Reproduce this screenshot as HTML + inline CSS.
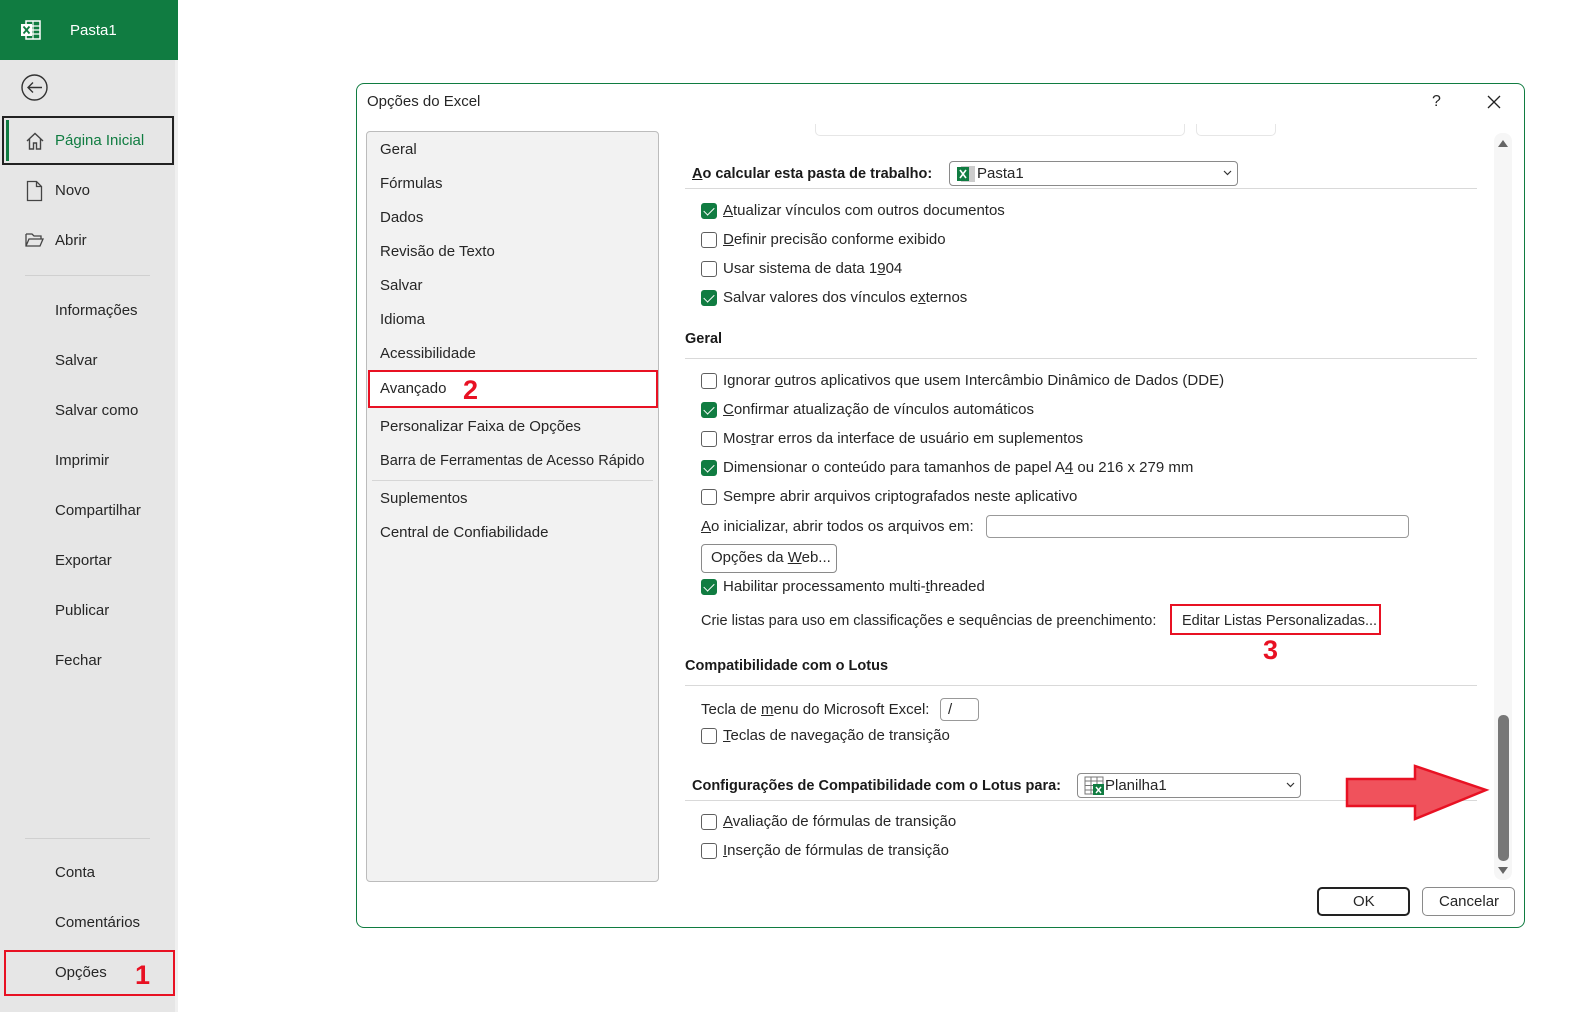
<!DOCTYPE html>
<html><head><meta charset="utf-8">
<style>
*{margin:0;padding:0;box-sizing:border-box}
body{width:1572px;height:1012px;position:relative;background:#fff;font-family:"Liberation Sans",sans-serif;font-size:15px;color:#262626;overflow:hidden}
.a{position:absolute;white-space:nowrap;line-height:18px}
.b{font-weight:bold;color:#1a1a1a;font-size:14.5px}
.cb{position:absolute;width:16px;height:16px;border:1px solid #5f5f5f;border-radius:3px;background:#fff}
.cb.on{background:#107c41;border-color:#107c41}
.cb.on::after{content:"";position:absolute;left:4px;top:1px;width:5px;height:9px;border:solid #fff;border-width:0 1.8px 1.8px 0;transform:rotate(45deg)}
.hr{position:absolute;height:1px;background:#d9d9d9}
.red{position:absolute;border:2.5px solid #e81123}
.num{position:absolute;color:#e81123;font-weight:bold;font-size:27px;line-height:26px}
.btn{position:absolute;border:1px solid #8a8a8a;border-radius:4px;background:#fff}
u{text-decoration:underline}
</style></head><body>
<div style="position:absolute;left:0;top:0;width:178px;height:60px;background:#107c41"></div>
<svg style="position:absolute;left:20px;top:20px" width="21" height="20" viewBox="0 0 21 20"><rect x="6" y="1" width="14" height="18" fill="none" stroke="#fff" stroke-width="1.5"/><path d="M6 6h14M6 10h14M6 14h14M13 1v18" stroke="#fff" stroke-width="1.2"/><rect x="1" y="4" width="11" height="12" fill="#fff"/><path d="M3.5 6.5l6 7M9.5 6.5l-6 7" stroke="#107c41" stroke-width="1.8"/></svg>
<div class="a" style="left:70px;top:22px;color:#fff;font-size:15px">Pasta1</div>
<div style="position:absolute;left:0;top:60px;width:175px;height:952px;background:#e6e6e6"></div>
<div style="position:absolute;left:175px;top:60px;width:3px;height:952px;background:#f0f0f0"></div>
<svg style="position:absolute;left:20px;top:73px" width="29" height="29"><circle cx="14.5" cy="14.5" r="12.5" fill="none" stroke="#333" stroke-width="1.4"/><path d="M8 14.5h14M13 9.5l-5 5 5 5" fill="none" stroke="#333" stroke-width="1.4"/></svg>
<div style="position:absolute;left:2px;top:116px;width:172px;height:49px;border:2px solid #222"></div>
<div style="position:absolute;left:6px;top:120px;width:3px;height:41px;background:#107c41"></div>
<svg style="position:absolute;left:25px;top:131px" width="20" height="20"><path d="M2 10L10 2.5 18 10M4.5 8v10h4v-6h3v6h4V8" fill="none" stroke="#444" stroke-width="1.4"/></svg>
<div class="a" style="left:55px;top:132px;color:#107c41">Página Inicial</div>
<svg style="position:absolute;left:26px;top:180px" width="18" height="22"><path d="M1.5 1.5h9l5 5v14h-14z M10.5 1.5v5h5" fill="none" stroke="#444" stroke-width="1.3"/></svg>
<div class="a" style="left:55px;top:182px">Novo</div>
<svg style="position:absolute;left:25px;top:232px" width="20" height="16"><path d="M1 2h6l2 2h7v3M1 2v12h14l3-7H4L1 14" fill="none" stroke="#444" stroke-width="1.3"/></svg>
<div class="a" style="left:55px;top:232px">Abrir</div>
<div class="hr" style="left:25px;top:275px;width:125px;background:#d0d0d0"></div>
<div class="a" style="left:55px;top:302px">Informações</div>
<div class="a" style="left:55px;top:352px">Salvar</div>
<div class="a" style="left:55px;top:402px">Salvar como</div>
<div class="a" style="left:55px;top:452px">Imprimir</div>
<div class="a" style="left:55px;top:502px">Compartilhar</div>
<div class="a" style="left:55px;top:552px">Exportar</div>
<div class="a" style="left:55px;top:602px">Publicar</div>
<div class="a" style="left:55px;top:652px">Fechar</div>
<div class="hr" style="left:25px;top:838px;width:125px;background:#d0d0d0"></div>
<div class="a" style="left:55px;top:864px">Conta</div>
<div class="a" style="left:55px;top:914px">Comentários</div>
<div class="red" style="left:4px;top:950px;width:171px;height:46px"></div>
<div class="a" style="left:55px;top:964px">Opções</div>
<div class="num" style="left:135px;top:962px">1</div>

<div style="position:absolute;left:356px;top:83px;width:1169px;height:845px;border:1px solid #107c41;border-radius:8px;background:#fff"></div>
<div class="a" style="left:367px;top:93px">Opções do Excel</div>
<div class="a" style="left:1432px;top:93px;font-size:16px">?</div>
<svg style="position:absolute;left:1487px;top:95px" width="14" height="14"><path d="M1 1l12 12M13 1L1 13" stroke="#222" stroke-width="1.3"/></svg>

<div style="position:absolute;left:366px;top:131px;width:293px;height:751px;border:1px solid #bcbcbc;border-radius:4px;background:#f2f2f2"></div>
<div class="a" style="left:380px;top:141px">Geral</div>
<div class="a" style="left:380px;top:175px">Fórmulas</div>
<div class="a" style="left:380px;top:209px">Dados</div>
<div class="a" style="left:380px;top:243px">Revisão de Texto</div>
<div class="a" style="left:380px;top:277px">Salvar</div>
<div class="a" style="left:380px;top:311px">Idioma</div>
<div class="a" style="left:380px;top:345px">Acessibilidade</div>
<div style="position:absolute;left:368px;top:370px;width:289px;height:38px;background:#fff"></div>
<div class="red" style="left:368px;top:370px;width:290px;height:38px"></div>
<div class="a" style="left:380px;top:380px">Avançado</div>
<div class="num" style="left:463px;top:377px">2</div>
<div class="a" style="left:380px;top:418px">Personalizar Faixa de Opções</div>
<div class="a" style="left:380px;top:452px;font-size:14.6px">Barra de Ferramentas de Acesso Rápido</div>
<div class="hr" style="left:372px;top:480px;width:281px;background:#d6d6d6"></div>
<div class="a" style="left:380px;top:490px">Suplementos</div>
<div class="a" style="left:380px;top:524px">Central de Confiabilidade</div>

<div style="position:absolute;left:815px;top:124px;width:370px;height:12px;border:1px solid #e6e6e6;border-top:none;border-radius:0 0 5px 5px"></div>
<div style="position:absolute;left:1196px;top:124px;width:80px;height:12px;border:1px solid #e6e6e6;border-top:none;border-radius:0 0 5px 5px"></div>

<div class="a b" style="left:692px;top:165px"><u>A</u>o calcular esta pasta de trabalho:</div>
<div class="btn" style="left:949px;top:161px;width:289px;height:25px"></div>
<svg style="position:absolute;left:956px;top:165px" width="20" height="18"><rect x="5" y="1" width="14" height="16" fill="#ccc"/><rect x="1" y="2" width="12" height="14" fill="#107c41"/><path d="M4 5l6 8M10 5l-6 8" stroke="#fff" stroke-width="1.6"/></svg>
<div class="a" style="left:977px;top:165px">Pasta1</div>
<svg style="position:absolute;left:1223px;top:170px" width="9" height="6"><path d="M1 1l3.5 3.5L8 1" fill="none" stroke="#333" stroke-width="1.2"/></svg>
<div class="hr" style="left:685px;top:188px;width:792px"></div>

<div class="cb on" style="left:701px;top:203px"></div><div class="a" style="left:723px;top:202px"><u>A</u>tualizar vínculos com outros documentos</div>
<div class="cb" style="left:701px;top:232px"></div><div class="a" style="left:723px;top:231px"><u>D</u>efinir precisão conforme exibido</div>
<div class="cb" style="left:701px;top:261px"></div><div class="a" style="left:723px;top:260px">Usar sistema de data 1<u>9</u>04</div>
<div class="cb on" style="left:701px;top:290px"></div><div class="a" style="left:723px;top:289px">Salvar valores dos vínculos e<u>x</u>ternos</div>

<div class="a b" style="left:685px;top:330px">Geral</div>
<div class="hr" style="left:685px;top:358px;width:792px"></div>
<div class="cb" style="left:701px;top:373px"></div><div class="a" style="left:723px;top:372px">Ignorar <u>o</u>utros aplicativos que usem Intercâmbio Dinâmico de Dados (DDE)</div>
<div class="cb on" style="left:701px;top:402px"></div><div class="a" style="left:723px;top:401px"><u>C</u>onfirmar atualização de vínculos automáticos</div>
<div class="cb" style="left:701px;top:431px"></div><div class="a" style="left:723px;top:430px">Mos<u>t</u>rar erros da interface de usuário em suplementos</div>
<div class="cb on" style="left:701px;top:460px"></div><div class="a" style="left:723px;top:459px">Dimensionar o conteúdo para tamanhos de papel A<u>4</u> ou 216 x 279 mm</div>
<div class="cb" style="left:701px;top:489px"></div><div class="a" style="left:723px;top:488px">Sempre abrir arquivos criptografados neste aplicativo</div>
<div class="a" style="left:701px;top:518px"><u>A</u>o inicializar, abrir todos os arquivos em:</div>
<div class="btn" style="left:986px;top:515px;width:423px;height:23px;border-color:#999"></div>
<div class="btn" style="left:701px;top:544px;width:136px;height:29px"></div>
<div class="a" style="left:711px;top:549px">Opções da <u>W</u>eb...</div>
<div class="cb on" style="left:701px;top:579px"></div><div class="a" style="left:723px;top:578px">Habilitar processamento multi-<u>t</u>hreaded</div>
<div class="a" style="left:701px;top:612px;font-size:14.5px">Crie listas para uso em classificações e sequências de preenchimento:</div>
<div class="red" style="left:1170px;top:604px;width:211px;height:31px"></div>
<div class="a" style="left:1182px;top:612px;font-size:14.5px">Editar Listas Personalizadas...</div>
<div class="num" style="left:1263px;top:637px">3</div>

<div class="a b" style="left:685px;top:657px">Compatibilidade com o Lotus</div>
<div class="hr" style="left:685px;top:685px;width:792px"></div>
<div class="a" style="left:701px;top:701px">Tecla de <u>m</u>enu do Microsoft Excel:</div>
<div class="btn" style="left:940px;top:698px;width:39px;height:23px;border-color:#999"></div>
<div class="a" style="left:948px;top:701px">/</div>
<div class="cb" style="left:701px;top:728px"></div><div class="a" style="left:723px;top:727px"><u>T</u>eclas de navegação de transição</div>

<div class="a b" style="left:692px;top:777px">Configurações de Compatibilidade com o Lotus para:</div>
<div class="btn" style="left:1077px;top:773px;width:224px;height:25px"></div>
<svg style="position:absolute;left:1084px;top:776px" width="21" height="20"><rect x="1" y="1" width="18" height="17" fill="#fff" stroke="#777"/><path d="M1 5h18M1 9.5h18M1 14h18M7 1v17M13 1v17" stroke="#777"/><rect x="9" y="8" width="11" height="11" fill="#107c41"/><path d="M12 11l5 6M17 11l-5 6" stroke="#fff" stroke-width="1.4"/></svg>
<div class="a" style="left:1105px;top:777px">Planilha1</div>
<svg style="position:absolute;left:1286px;top:782px" width="9" height="6"><path d="M1 1l3.5 3.5L8 1" fill="none" stroke="#333" stroke-width="1.2"/></svg>
<div class="hr" style="left:685px;top:800px;width:792px"></div>
<div class="cb" style="left:701px;top:814px"></div><div class="a" style="left:723px;top:813px"><u>A</u>valiação de fórmulas de transição</div>
<div class="cb" style="left:701px;top:843px"></div><div class="a" style="left:723px;top:842px"><u>I</u>nserção de fórmulas de transição</div>

<svg style="position:absolute;left:1344px;top:763px" width="148" height="60"><path d="M3 16H71V3L142 27 71 56V43H3Z" fill="#f0525c" stroke="#e81123" stroke-width="2.5"/></svg>

<div style="position:absolute;left:1494px;top:133px;width:18px;height:747px;background:#f6f6f6;border-radius:8px"></div>
<svg style="position:absolute;left:1497px;top:138px" width="12" height="10"><path d="M1 9L6 2 11 9z" fill="#666"/></svg>
<div style="position:absolute;left:1498px;top:715px;width:11px;height:146px;background:#777;border-radius:5px"></div>
<svg style="position:absolute;left:1497px;top:866px" width="12" height="10"><path d="M1 1L6 8 11 1z" fill="#666"/></svg>

<div class="btn" style="left:1317px;top:887px;width:93px;height:29px;border:2px solid #222;border-radius:5px"></div>
<div class="a" style="left:1353px;top:893px">OK</div>
<div class="btn" style="left:1422px;top:887px;width:93px;height:29px;border-radius:5px"></div>
<div class="a" style="left:1439px;top:893px">Cancelar</div>
</body></html>
